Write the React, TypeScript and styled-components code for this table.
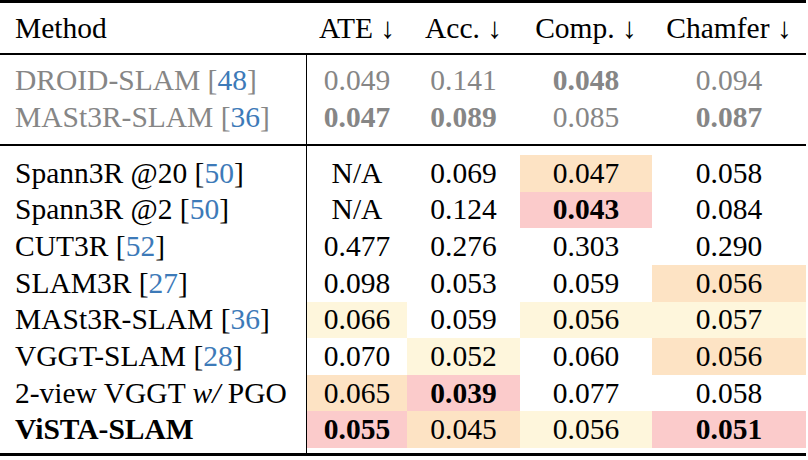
import React from 'react';
import styled, { createGlobalStyle } from 'styled-components';

const GlobalStyle = createGlobalStyle`
  body {
    margin: 0;
    background: #fff;
  }
`;

const COLS = '307px 100px 113px 132px 154px';

const RANK_BG: Record<number, string> = {
  1: '#fbcbcb',
  2: '#fde3c4',
  3: '#fef6dc',
};

const Table = styled.div`
  width: 806px;
  font-family: "Liberation Serif", "Times New Roman", Times, "DejaVu Serif", serif;
  font-size: 29.5px;
  color: #000;
  border-top: 3px solid #000;
  border-bottom: 3px solid #000;
`;

const HeaderRow = styled.div`
  display: grid;
  grid-template-columns: ${COLS};
  height: 50px;
  border-bottom: 2px solid #000;
`;

const HeadCell = styled.div<{ $left?: boolean }>`
  display: flex;
  align-items: center;
  justify-content: ${p => (p.$left ? 'flex-start' : 'center')};
  padding-left: ${p => (p.$left ? '15px' : '0')};
  white-space: nowrap;
`;

const Section = styled.div<{ $top: number; $bottom: number; $rowHeight: number }>`
  display: grid;
  grid-template-columns: ${COLS};
  grid-auto-rows: ${p => p.$rowHeight}px;
  padding: ${p => p.$top}px 0 ${p => p.$bottom}px;
  /* the column rule after the method names */
  background: linear-gradient(#000, #000) no-repeat 306px 0 / 1px 100%;

  & + & {
    border-top: 2px solid #000;
  }
`;

const NameCell = styled.div<{ $muted?: boolean; $bold?: boolean }>`
  display: flex;
  align-items: center;
  padding-left: 15px;
  white-space: nowrap;
  color: ${p => (p.$muted ? '#868686' : '#000')};
  font-weight: ${p => (p.$bold ? 700 : 400)};
`;

const ValueCell = styled.div<{ $rank?: number; $muted?: boolean; $bold?: boolean }>`
  display: flex;
  align-items: center;
  justify-content: center;
  background: ${p => (p.$rank ? RANK_BG[p.$rank] : 'transparent')};
  color: ${p => (p.$muted ? '#868686' : '#000')};
  font-weight: ${p => (p.$bold ? 700 : 400)};
`;

const Cite = styled.span`
  color: #3d7ab8;
`;

type Val = { v: string; b?: boolean; r?: number };

interface Row {
  name: React.ReactNode;
  bold?: boolean;
  vals: Val[];
}

const withCite = (label: string, ref: string) => (
  <span>
    {label} [<Cite>{ref}</Cite>]
  </span>
);

const baselines: Row[] = [
  {
    name: withCite('DROID-SLAM', '48'),
    vals: [{ v: '0.049' }, { v: '0.141' }, { v: '0.048', b: true }, { v: '0.094' }],
  },
  {
    name: withCite('MASt3R-SLAM', '36'),
    vals: [{ v: '0.047', b: true }, { v: '0.089', b: true }, { v: '0.085' }, { v: '0.087', b: true }],
  },
];

const methods: Row[] = [
  {
    name: withCite('Spann3R @20', '50'),
    vals: [{ v: 'N/A' }, { v: '0.069' }, { v: '0.047', r: 2 }, { v: '0.058' }],
  },
  {
    name: withCite('Spann3R @2', '50'),
    vals: [{ v: 'N/A' }, { v: '0.124' }, { v: '0.043', b: true, r: 1 }, { v: '0.084' }],
  },
  {
    name: withCite('CUT3R', '52'),
    vals: [{ v: '0.477' }, { v: '0.276' }, { v: '0.303' }, { v: '0.290' }],
  },
  {
    name: withCite('SLAM3R', '27'),
    vals: [{ v: '0.098' }, { v: '0.053' }, { v: '0.059' }, { v: '0.056', r: 2 }],
  },
  {
    name: withCite('MASt3R-SLAM', '36'),
    vals: [{ v: '0.066', r: 3 }, { v: '0.059' }, { v: '0.056', r: 3 }, { v: '0.057', r: 3 }],
  },
  {
    name: withCite('VGGT-SLAM', '28'),
    vals: [{ v: '0.070' }, { v: '0.052', r: 3 }, { v: '0.060' }, { v: '0.056', r: 2 }],
  },
  {
    name: <span>2-view VGGT <i>w/</i> PGO</span>,
    vals: [{ v: '0.065', r: 2 }, { v: '0.039', b: true, r: 1 }, { v: '0.077' }, { v: '0.058' }],
  },
  {
    name: 'ViSTA-SLAM',
    bold: true,
    vals: [{ v: '0.055', b: true, r: 1 }, { v: '0.045', r: 2 }, { v: '0.056', r: 3 }, { v: '0.051', b: true, r: 1 }],
  },
];

const headers = ['ATE ↓', 'Acc. ↓', 'Comp. ↓', 'Chamfer ↓'];

const renderRows = (rows: Row[], muted: boolean) =>
  rows.map((row, i) => (
    <React.Fragment key={i}>
      <NameCell $muted={muted} $bold={row.bold}>
        {row.name}
      </NameCell>
      {row.vals.map((val, j) => (
        <ValueCell key={j} $muted={muted} $bold={val.b} $rank={val.r}>
          {val.v}
        </ValueCell>
      ))}
    </React.Fragment>
  ));

const App = () => {
  return (
    <>
      <GlobalStyle />
      <Table>
        <HeaderRow>
          <HeadCell $left>Method</HeadCell>
          {headers.map(h => (
            <HeadCell key={h}>{h}</HeadCell>
          ))}
        </HeaderRow>
        <Section $top={7} $bottom={8} $rowHeight={37}>
          {renderRows(baselines, true)}
        </Section>
        <Section $top={9} $bottom={5} $rowHeight={36.65}>
          {renderRows(methods, false)}
        </Section>
      </Table>
    </>
  );
};

export default App;
